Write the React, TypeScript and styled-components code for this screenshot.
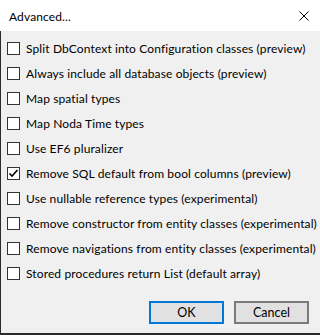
import * as React from "react";
import styled, { createGlobalStyle } from "styled-components";

const options: { label: string; checked: boolean }[] = [
    { label: "Split DbContext into Configuration classes (preview)", checked: false },
    { label: "Always include all database objects (preview)", checked: false },
    { label: "Map spatial types", checked: false },
    { label: "Map Noda Time types", checked: false },
    { label: "Use EF6 pluralizer", checked: false },
    { label: "Remove SQL default from bool columns (preview)", checked: true },
    { label: "Use nullable reference types (experimental)", checked: false },
    { label: "Remove constructor from entity classes (experimental)", checked: false },
    { label: "Remove navigations from entity classes (experimental)", checked: false },
    { label: "Stored procedures return List (default array)", checked: false },
];

export default function App() {
    return <>
        <GlobalStyle />
        <StyledWindow>
            <StyledTitleBar>
                <StyledTitle>Advanced...</StyledTitle>
                <StyledClose>
                    <svg width="10" height="10" viewBox="0 0 10 10">
                        <path d="M0.5 0.5 L9.5 9.5 M9.5 0.5 L0.5 9.5" stroke="#000" strokeWidth="1" />
                    </svg>
                </StyledClose>
            </StyledTitleBar>
            <StyledBody>
                <StyledList>
                    {options.map((option, index) => (
                        <StyledRow key={index}>
                            <StyledBox>
                                {option.checked &&
                                    <svg width="11" height="11" viewBox="0 0 11 11">
                                        <path d="M1.5 5.5 L4 8 L9.5 2" stroke="#000" strokeWidth="1.6" fill="none" />
                                    </svg>}
                            </StyledBox>
                            <StyledLabel>{option.label}</StyledLabel>
                        </StyledRow>
                    ))}
                </StyledList>
                <StyledButtons>
                    <StyledButton primary>OK</StyledButton>
                    <StyledButton>Cancel</StyledButton>
                </StyledButtons>
            </StyledBody>
        </StyledWindow>
    </>;
}

const GlobalStyle = createGlobalStyle`
html, body {
margin: 0;
padding: 0;
background: #f0f0f0;
}
body {
font-family: "Lato", "Noto Sans", sans-serif;
font-size: 12px;
color: #000;
}
`;

const StyledWindow = styled.div`
width: 320px;
height: 335px;
display: flex;
flex-direction: column;
box-sizing: border-box;
overflow: hidden;
`;

const StyledTitleBar = styled.div`
height: 31px;
flex: none;
background: #fff;
display: flex;
align-items: center;
justify-content: space-between;
padding: 1px 9px 0 9px;
box-sizing: border-box;
`;

const StyledTitle = styled.div`
font-size: 12px;
letter-spacing: 0.12px;
`;

const StyledClose = styled.div`
width: 10px;
height: 10px;
display: flex;
margin-right: 2px;
`;

const StyledBody = styled.div`
flex: 1;
background: #f0f0f0;
border-left: 1px solid #2b2b2b;
border-bottom: 2px solid #2b2b2b;
display: flex;
flex-direction: column;
padding: 5px 0 0 6px;
`;

const StyledList = styled.div`
display: flex;
flex-direction: column;
`;

const StyledRow = styled.div`
height: 25px;
display: flex;
align-items: center;
gap: 6px;
`;

const StyledBox = styled.div`
width: 13px;
height: 13px;
box-sizing: border-box;
border: 1px solid #333;
background: #fff;
display: flex;
align-items: center;
justify-content: center;
flex: none;
`;

const StyledLabel = styled.span`
white-space: nowrap;
line-height: 16px;
letter-spacing: 0.12px;
`;

const StyledButtons = styled.div`
display: flex;
justify-content: flex-end;
gap: 10px;
padding: 15px 11px 0 0;
`;

const StyledButton = styled.button<{ primary?: boolean }>`
width: 75px;
height: 23px;
box-sizing: border-box;
background: #e1e1e1;
border: 2px solid ${props => props.primary ? "#0078d7" : "#7a7a7a"};
font-family: inherit;
font-size: 12.5px;
color: #000;
padding: 0;
`;
